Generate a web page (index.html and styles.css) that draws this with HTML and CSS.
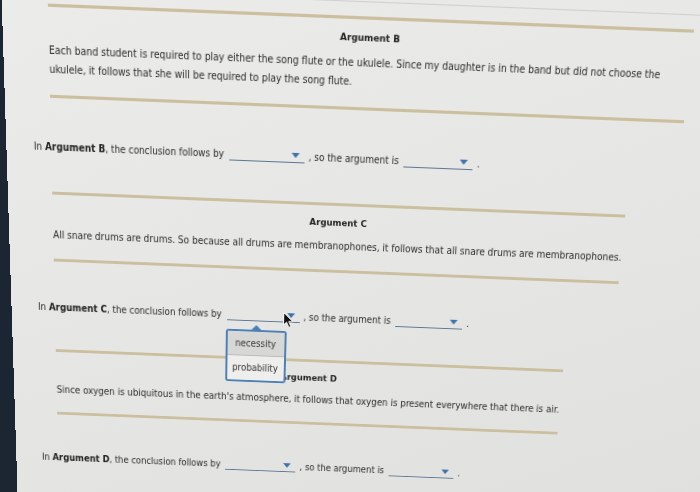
FILE: index.html
```html
<!DOCTYPE html>
<html lang="en">
<head>
<meta charset="utf-8">
<title>Arguments</title>
<link rel="stylesheet" href="styles.css">
</head>
<body>
<div class="screen">
  <div class="topline"></div>

  <section class="arg">
    <h2 class="arg-title">Argument B</h2>
    <p class="arg-text">Each band student is required to play either the song flute or the ukulele. Since my daughter is in the band but did not choose the ukulele, it follows that she will be required to play the song flute.</p>
  </section>
  <div class="prompt">In <b>Argument B</b>, the conclusion follows by<span class="blank blank-a"><span class="arrow"></span></span>, so the argument is<span class="blank blank-b"><span class="arrow"></span></span>.</div>

  <section class="arg">
    <h2 class="arg-title">Argument C</h2>
    <p class="arg-text">All snare drums are drums. So because all drums are membranophones, it follows that all snare drums are membranophones.</p>
  </section>
  <div class="prompt">In <b>Argument C</b>, the conclusion follows by<span class="blank blank-a open"><span class="arrow"></span><svg class="cursor" width="11" height="17" viewBox="0 0 11 17"><path d="M0.5 0.5 L0.5 13.5 L3.6 10.6 L6 16 L8 15.1 L5.7 9.8 L10 9.8 Z" fill="#111" stroke="#f4f4f4" stroke-width="1"/></svg><span class="menu"><span class="menu-item selected">necessity</span><span class="menu-item">probability</span></span></span>, so the argument is<span class="blank blank-b"><span class="arrow"></span></span>.</div>

  <section class="arg">
    <h2 class="arg-title">Argument D</h2>
    <p class="arg-text">Since oxygen is ubiquitous in the earth's atmosphere, it follows that oxygen is present everywhere that there is air.</p>
  </section>
  <div class="prompt">In <b>Argument D</b>, the conclusion follows by<span class="blank blank-a"><span class="arrow"></span></span>, so the argument is<span class="blank blank-b"><span class="arrow"></span></span>.</div>
</div>
</body>
</html>
```
FILE: styles.css
```css
html, body {
  margin: 0;
  padding: 0;
  background: #1c2633;
  height: 492px;
  overflow: hidden;
}

.screen {
  box-sizing: border-box;
  width: 800px;
  height: 640px;
  margin: -40px 0 0 9px;
  padding-top: 40px;
  background: linear-gradient(160deg, #ececea 0%, #e6e6e4 45%, #dedfdd 100%);
  color: #2b2b2b;
  font-family: "DejaVu Sans Condensed", "DejaVu Sans", sans-serif;
  font-stretch: condensed;
  font-size: 9.8px;
  transform-origin: 341px 290px;
  transform: perspective(1000px) rotate(2.3deg) rotateX(-12deg);
}

.topline {
  height: 1px;
  margin-top: 8px;
  background: #d0d0ce;
}

.arg {
  width: fit-content;
  max-width: 616px;
  margin: 35px 0 0 44px;
  padding: 10px 0 15px;
  border-top: 3px solid #cbbf9f;
  border-bottom: 3px solid #cbbf9f;
}

.arg:first-of-type {
  margin-top: 13px;
}

.arg-title {
  margin: 0;
  font-size: 9.5px;
  line-height: 14px;
  font-weight: bold;
  text-align: center;
  color: #222;
}

.arg-text {
  margin: 8px 0 0;
  font-size: 10px;
  line-height: 18px;
}

.prompt {
  margin: 39px 0 0 27px;
  line-height: 18px;
}

.prompt b {
  color: #222;
}

.blank {
  position: relative;
  display: inline-block;
  height: 14px;
  margin: 0 4px 0 5px;
  border-bottom: 1px solid #5d7894;
  vertical-align: -3px;
}

.blank-a { width: 74px; }
.blank-b { width: 68px; }

.arrow {
  position: absolute;
  right: 5px;
  bottom: 4px;
  width: 0;
  height: 0;
  border-left: 4px solid transparent;
  border-right: 4px solid transparent;
  border-top: 5px solid #3e74ae;
}

.cursor {
  position: absolute;
  left: 57px;
  top: 4px;
}

.menu {
  position: absolute;
  left: -1px;
  top: calc(100% + 10px);
  width: 58px;
  display: flex;
  flex-direction: column;
  border: 2px solid #4b80b4;
  border-radius: 3px;
  background: #eeeeec;
  z-index: 2;
}

.menu::before {
  content: "";
  position: absolute;
  top: -7px;
  left: 24px;
  border-left: 5px solid transparent;
  border-right: 5px solid transparent;
  border-bottom: 5px solid #4b80b4;
}

.menu-item {
  display: block;
  height: 26px;
  line-height: 26px;
  text-align: center;
  color: #333;
  white-space: nowrap;
}

.menu-item.selected {
  background: #d7d8d6;
  border-bottom: 1px solid #b9bab8;
  height: 25px;
}
```
